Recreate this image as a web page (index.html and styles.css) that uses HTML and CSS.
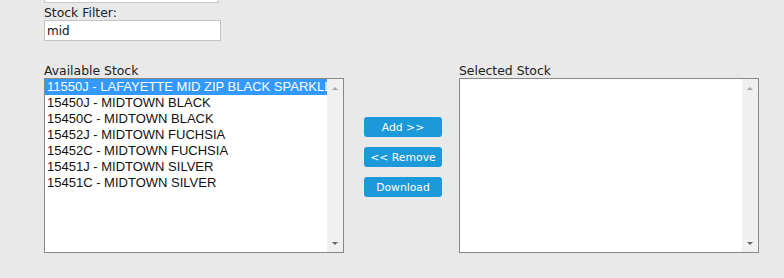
FILE: index.html
```html
<!DOCTYPE html>
<html lang="en">
<head>
    <meta charset="UTF-8">
    <title>Stock Selection</title>
    <link rel="stylesheet" href="styles.css">
</head>
<body>
    <div class="page">
        <div class="prev-field"></div>

        <label class="field-label" for="stock-filter">Stock Filter:</label>
        <input id="stock-filter" class="filter-input" type="text" value="mid">

        <div class="transfer">
            <div class="list-col">
                <div class="field-label">Available Stock</div>
                <div class="listbox">
                    <ul class="options">
                        <li class="option selected">11550J - LAFAYETTE MID ZIP BLACK SPARKLE</li>
                        <li class="option">15450J - MIDTOWN BLACK</li>
                        <li class="option">15450C - MIDTOWN BLACK</li>
                        <li class="option">15452J - MIDTOWN FUCHSIA</li>
                        <li class="option">15452C - MIDTOWN FUCHSIA</li>
                        <li class="option">15451J - MIDTOWN SILVER</li>
                        <li class="option">15451C - MIDTOWN SILVER</li>
                    </ul>
                    <div class="scrollbar">
                        <span class="arrow up"></span>
                        <span class="arrow down"></span>
                    </div>
                </div>
            </div>

            <div class="actions">
                <button class="btn">Add &gt;&gt;</button>
                <button class="btn">&lt;&lt; Remove</button>
                <button class="btn">Download</button>
            </div>

            <div class="list-col">
                <div class="field-label">Selected Stock</div>
                <div class="listbox">
                    <ul class="options"></ul>
                    <div class="scrollbar">
                        <span class="arrow up"></span>
                        <span class="arrow down"></span>
                    </div>
                </div>
            </div>
        </div>
    </div>
</body>
</html>
```

FILE: styles.css
```css
body {
    margin: 0;
    background: #e9e9e9;
    font-family: "DejaVu Sans", Verdana, sans-serif;
    color: #222;
}

.page {
    padding-left: 44px;
}

.prev-field {
    width: 173px;
    height: 2px;
    background: #fff;
    border: 1px solid #c6c6c6;
    border-top: none;
}

.field-label {
    display: block;
    margin-top: 2px;
    font-size: 12.4px;
    line-height: 15px;
    color: #222;
}

.filter-input {
    display: block;
    box-sizing: border-box;
    width: 177px;
    height: 21px;
    margin: 0;
    padding: 0 2px;
    border: 1px solid #c3c3c3;
    background: #fff;
    font-family: "DejaVu Sans", Verdana, sans-serif;
    font-size: 12px;
    color: #111;
    outline: none;
}

.transfer {
    display: flex;
    align-items: flex-start;
    margin-top: 20px;
}

.list-col {
    width: 300px;
}

.listbox {
    box-sizing: border-box;
    display: flex;
    width: 300px;
    height: 175px;
    border: 1px solid #888;
    background: #fff;
}

.options {
    flex: 1;
    min-width: 0;
    margin: 0;
    padding: 0;
    list-style: none;
    overflow: hidden;
    font-family: "Liberation Sans", Arial, sans-serif;
    font-size: 13px;
}

.option {
    height: 16px;
    line-height: 16px;
    padding-left: 2px;
    white-space: nowrap;
    overflow: hidden;
    color: #111;
}

.option.selected {
    background: #3399ff;
    color: #fff;
}

.scrollbar {
    width: 16px;
    display: flex;
    flex-direction: column;
    justify-content: space-between;
    align-items: center;
    padding: 8px 0 7px;
    background: #f0f0f0;
}

.arrow {
    width: 0;
    height: 0;
    border-left: 3px solid transparent;
    border-right: 3px solid transparent;
}

.arrow.up {
    border-bottom: 3px solid #aaa;
}

.arrow.down {
    border-top: 3px solid #666;
}

.actions {
    display: flex;
    flex-direction: column;
    gap: 10px;
    width: 78px;
    margin: 56px 17px 0 20px;
}

.btn {
    height: 20px;
    padding: 0;
    border: none;
    border-radius: 3px;
    background: #1b99d8;
    color: #fff;
    font-family: "DejaVu Sans", Verdana, sans-serif;
    font-size: 10.8px;
    cursor: pointer;
}

.btn:hover {
    background: #1585c0;
}
```
